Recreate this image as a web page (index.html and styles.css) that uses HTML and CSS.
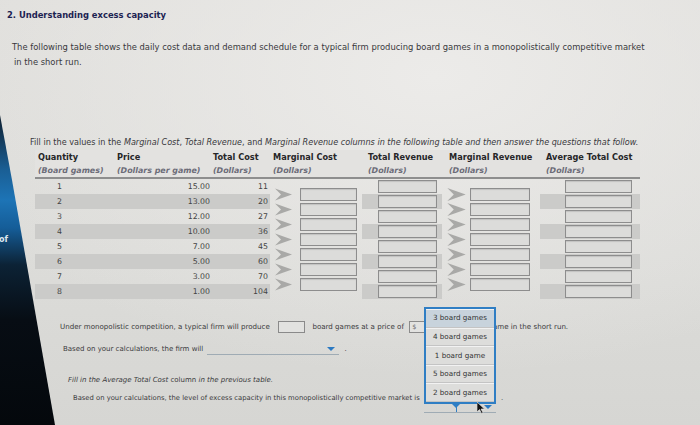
FILE: index.html
```html
<!DOCTYPE html>
<html lang="en">
<head>
<meta charset="utf-8">
<title>Understanding excess capacity</title>
<link rel="stylesheet" href="styles.css">
</head>
<body>
<div class="screen-edge"><span class="edge-text">of</span></div>
<main class="page">
  <h2 class="title">2. Understanding excess capacity</h2>
  <p class="intro">The following table shows the daily cost data and demand schedule for a typical firm producing board games in a monopolistically competitive market<br><span class="l2">in the short run.</span></p>
  <p class="instr">Fill in the values in the <i>Marginal Cost</i>, <i>Total Revenue</i>, and <i>Marginal Revenue</i> <i>columns in the following table and then answer the questions that follow.</i></p>

  <div class="cost-table">
    <div class="col c-qty">
      <div class="col-head"><b>Quantity</b><i>(Board games)</i></div>
      <div class="cells">
        <div class="cell">1</div><div class="cell">2</div><div class="cell">3</div><div class="cell">4</div>
        <div class="cell">5</div><div class="cell">6</div><div class="cell">7</div><div class="cell">8</div>
      </div>
    </div>
    <div class="col c-price">
      <div class="col-head"><b>Price</b><i>(Dollars per game)</i></div>
      <div class="cells num">
        <div class="cell">15.00</div><div class="cell">13.00</div><div class="cell">12.00</div><div class="cell">10.00</div>
        <div class="cell">7.00</div><div class="cell">5.00</div><div class="cell">3.00</div><div class="cell">1.00</div>
      </div>
    </div>
    <div class="col c-tc">
      <div class="col-head"><b>Total Cost</b><i>(Dollars)</i></div>
      <div class="cells num">
        <div class="cell">11</div><div class="cell">20</div><div class="cell">27</div><div class="cell">36</div>
        <div class="cell">45</div><div class="cell">60</div><div class="cell">70</div><div class="cell">104</div>
      </div>
    </div>
    <div class="col c-mc">
      <div class="col-head"><b>Marginal Cost</b><i>(Dollars)</i></div>
      <div class="cells between">
        <div class="cell"><svg class="chev" viewBox="0 0 17 12"><path d="M0 0 L17 6 L0 12 L6 6 Z"/></svg><span class="inp"></span></div>
        <div class="cell"><svg class="chev" viewBox="0 0 17 12"><path d="M0 0 L17 6 L0 12 L6 6 Z"/></svg><span class="inp"></span></div>
        <div class="cell"><svg class="chev" viewBox="0 0 17 12"><path d="M0 0 L17 6 L0 12 L6 6 Z"/></svg><span class="inp"></span></div>
        <div class="cell"><svg class="chev" viewBox="0 0 17 12"><path d="M0 0 L17 6 L0 12 L6 6 Z"/></svg><span class="inp"></span></div>
        <div class="cell"><svg class="chev" viewBox="0 0 17 12"><path d="M0 0 L17 6 L0 12 L6 6 Z"/></svg><span class="inp"></span></div>
        <div class="cell"><svg class="chev" viewBox="0 0 17 12"><path d="M0 0 L17 6 L0 12 L6 6 Z"/></svg><span class="inp"></span></div>
        <div class="cell"><svg class="chev" viewBox="0 0 17 12"><path d="M0 0 L17 6 L0 12 L6 6 Z"/></svg><span class="inp"></span></div>
      </div>
    </div>
    <div class="col c-tr">
      <div class="col-head"><b>Total Revenue</b><i>(Dollars)</i></div>
      <div class="cells">
        <div class="cell"><span class="inp"></span></div><div class="cell"><span class="inp"></span></div>
        <div class="cell"><span class="inp"></span></div><div class="cell"><span class="inp"></span></div>
        <div class="cell"><span class="inp"></span></div><div class="cell"><span class="inp"></span></div>
        <div class="cell"><span class="inp"></span></div><div class="cell"><span class="inp"></span></div>
      </div>
    </div>
    <div class="col c-mr">
      <div class="col-head"><b>Marginal Revenue</b><i>(Dollars)</i></div>
      <div class="cells between">
        <div class="cell"><svg class="chev" viewBox="0 0 17 12"><path d="M0 0 L17 6 L0 12 L6 6 Z"/></svg><span class="inp"></span></div>
        <div class="cell"><svg class="chev" viewBox="0 0 17 12"><path d="M0 0 L17 6 L0 12 L6 6 Z"/></svg><span class="inp"></span></div>
        <div class="cell"><svg class="chev" viewBox="0 0 17 12"><path d="M0 0 L17 6 L0 12 L6 6 Z"/></svg><span class="inp"></span></div>
        <div class="cell"><svg class="chev" viewBox="0 0 17 12"><path d="M0 0 L17 6 L0 12 L6 6 Z"/></svg><span class="inp"></span></div>
        <div class="cell"><svg class="chev" viewBox="0 0 17 12"><path d="M0 0 L17 6 L0 12 L6 6 Z"/></svg><span class="inp"></span></div>
        <div class="cell"><svg class="chev" viewBox="0 0 17 12"><path d="M0 0 L17 6 L0 12 L6 6 Z"/></svg><span class="inp"></span></div>
        <div class="cell"><svg class="chev" viewBox="0 0 17 12"><path d="M0 0 L17 6 L0 12 L6 6 Z"/></svg><span class="inp"></span></div>
      </div>
    </div>
    <div class="col c-atc">
      <div class="col-head"><b>Average Total Cost</b><i>(Dollars)</i></div>
      <div class="cells">
        <div class="cell"><span class="inp"></span></div><div class="cell"><span class="inp"></span></div>
        <div class="cell"><span class="inp"></span></div><div class="cell"><span class="inp"></span></div>
        <div class="cell"><span class="inp"></span></div><div class="cell"><span class="inp"></span></div>
        <div class="cell"><span class="inp"></span></div><div class="cell"><span class="inp"></span></div>
      </div>
    </div>
  </div>

  <div class="questions">
    <div class="q q1">Under monopolistic competition, a typical firm will produce <span class="ibox"></span> board games at a price of <span class="ibox dollar">$</span> per game in the short run.</div>
    <div class="q q2">Based on your calculations, the firm will <span class="sel wide"><span class="caret"></span></span><span class="dot">.</span></div>
    <div class="q q3"><i>Fill in the</i> <i>Average Total Cost</i> column <i>in the previous table.</i></div>
    <div class="q q4">Based on your calculations, the level of excess capacity in this monopolistically competitive market is <span class="sel open"><span class="menu"><span class="opt hl">3 board games</span><span class="opt">4 board games</span><span class="opt">1 board game</span><span class="opt">5 board games</span><span class="opt">2 board games</span></span><span class="stem"></span><svg class="cursor" viewBox="0 0 8 12"><path d="M0 0 L0 10 L2.5 7.5 L4.5 11.5 L6 10.8 L4 7 L7.5 7 Z" fill="#111" stroke="#eee" stroke-width="0.6"/></svg><span class="caret"></span></span><span class="dot">.</span></div>
  </div>
</main>
</body>
</html>
```

FILE: styles.css
```css
* { box-sizing: border-box; }

html, body { margin: 0; padding: 0; }

body {
  width: 700px;
  height: 425px;
  overflow: hidden;
  position: relative;
  font-family: "DejaVu Sans", Verdana, sans-serif;
  color: #3a3a3c;
  background:
    radial-gradient(ellipse 520px 300px at 62% 18%, #ecebe9 0%, rgba(236,235,233,0) 100%),
    linear-gradient(to bottom, #e0dfdc 0%, #dcdcd9 60%, #d6d6d3 100%);
}

.screen-edge {
  position: absolute;
  left: 0;
  top: 0;
  width: 60px;
  height: 425px;
  z-index: 5;
  clip-path: polygon(0 115px, 12px 180px, 55px 425px, 0 425px);
  background: linear-gradient(to bottom, #0e1e2e 115px, #1a5f95 170px, #1d74b6 200px, #155d98 228px, #0c2235 265px, #070d14 320px, #04080c 425px);
}
.edge-text {
  position: absolute;
  left: -1px;
  top: 235px;
  font-size: 8px;
  font-weight: bold;
  color: #dfe8f0;
}

.page {
  padding: 9px 0 0 7px;
}

.title {
  margin: 0;
  font-size: 8.4px;
  line-height: 12px;
  font-weight: bold;
  color: #1c2352;
}

.intro {
  margin: 19px 0 0 5px;
  font-size: 8.4px;
  line-height: 15px;
  color: #38383c;
  white-space: nowrap;
}
.intro .l2 { padding-left: 2px; }

.instr {
  margin: 66px 0 0 23px;
  font-size: 8.1px;
  line-height: 12px;
  color: #38383c;
  white-space: nowrap;
}

/* ---------- table ---------- */
.cost-table {
  display: flex;
  margin: 2px 0 0 28px;
  width: 605px;
}
.col { display: flex; flex-direction: column; }

.col-head {
  height: 29px;
  padding-top: 1px;
  line-height: 13px;
  border-bottom: 2px solid #8e8e8e;
  background: #e3e2e0;
  white-space: nowrap;
}
.col-head b {
  display: block;
  font-size: 8.2px;
  color: #262628;
}
.col-head i {
  display: block;
  font-size: 7.9px;
  font-weight: bold;
  color: #6c6c78;
}

.cells { display: flex; flex-direction: column; }
.cell {
  height: 15px;
  display: flex;
  align-items: center;
  font-size: 7.8px;
  color: #444;
}
.cells > .cell:nth-child(even) { background: #cbcbc9; }
.cells.num .cell { justify-content: flex-end; padding-right: 2px; }

.cells.between { padding-top: 8px; }
.cells.between > .cell:nth-child(even) { background: none; }

.c-qty { width: 77px; }
.c-qty .col-head { padding-left: 3px; }
.c-qty .cell { padding-left: 22px; }

.c-price { width: 100px; }
.c-price .col-head { padding-left: 5px; }

.c-tc { width: 58px; }
.c-tc .col-head { padding-left: 1px; }

.c-mc { width: 92px; }
.c-mc .col-head { padding-left: 3px; }
.c-mc .cell { padding-left: 5px; gap: 8px; }
.c-mc .inp { width: 57px; }

.c-tr { width: 80px; }
.c-tr .col-head { padding-left: 6px; }
.c-tr .cell { padding-left: 16px; }
.c-tr .inp { width: 59px; }

.c-mr { width: 98px; }
.c-mr .col-head { padding-left: 7px; }
.c-mr .cell { padding-left: 5px; gap: 4px; }
.c-mr .chev { width: 19px; }
.c-mr .inp { width: 60px; }

.c-atc { width: 100px; }
.c-atc .col-head { padding-left: 6px; }
.c-atc .cell { padding-left: 25px; }
.c-atc .inp { width: 67px; }

.chev {
  width: 17px;
  height: 13px;
  flex: none;
}
.chev path { fill: #a9a9a7; }

.inp {
  display: block;
  height: 13px;
  flex: none;
  border: 1px solid #8d8d8d;
  background: #dcdcda;
  box-shadow: inset 0 1px 1px rgba(0,0,0,0.12);
}

/* ---------- questions ---------- */
.questions { padding-left: 53px; }

.q {
  height: 14px;
  line-height: 14px;
  font-size: 7.1px;
  color: #3a3a3c;
  white-space: nowrap;
}
.q1 { margin-top: 21px; }
.q2 { margin-top: 8px; padding-left: 3px; font-size: 7px; }
.q3 { margin-top: 17px; padding-left: 8px; font-size: 7px; }
.q4 { margin-top: 4px; padding-left: 13px; font-size: 6.8px; }

.ibox {
  display: inline-block;
  vertical-align: middle;
  width: 27px;
  height: 12px;
  margin: 0 5px 0 6px;
  border: 1px solid #8a8a8a;
  background: #e2e2e0;
}
.ibox.dollar {
  width: 58px;
  margin-left: 3px;
  padding-left: 2px;
  font-size: 6.5px;
  line-height: 10px;
  color: #777;
}

.sel {
  position: relative;
  display: inline-block;
  vertical-align: middle;
  height: 12px;
  border-bottom: 1px solid #9fabb4;
}
.sel.wide { width: 132px; margin-left: 2px; }
.sel.open { width: 72px; height: 22px; margin-left: 2px; vertical-align: top; }
.dot { margin-left: 5px; }

.caret {
  position: absolute;
  right: 4px;
  bottom: 3px;
  width: 0;
  height: 0;
  border-left: 4px solid transparent;
  border-right: 4px solid transparent;
  border-top: 4px solid #2b79c2;
}

.menu {
  position: absolute;
  left: 0;
  bottom: 8px;
  width: 72px;
  display: flex;
  flex-direction: column;
  border: 2px solid #2f7ec4;
  background: #dddddb;
  z-index: 4;
}
.opt {
  height: 18.6px;
  display: flex;
  align-items: center;
  justify-content: center;
  font-size: 7.2px;
  color: #333;
  border-top: 1px solid #f2f2f2;
  border-bottom: 1px solid #c4c4c4;
}
.opt.hl { background: #c8d3dc; }

.stem {
  position: absolute;
  left: 32px;
  bottom: 0;
  width: 1px;
  height: 8px;
  background: #2f7ec4;
}
.stem::before {
  content: "";
  position: absolute;
  left: -4px;
  top: 0;
  border-left: 4.5px solid transparent;
  border-right: 4.5px solid transparent;
  border-top: 4px solid #2f7ec4;
}

.cursor {
  position: absolute;
  left: 53px;
  bottom: -2px;
  width: 8px;
  height: 12px;
  z-index: 6;
}
```
